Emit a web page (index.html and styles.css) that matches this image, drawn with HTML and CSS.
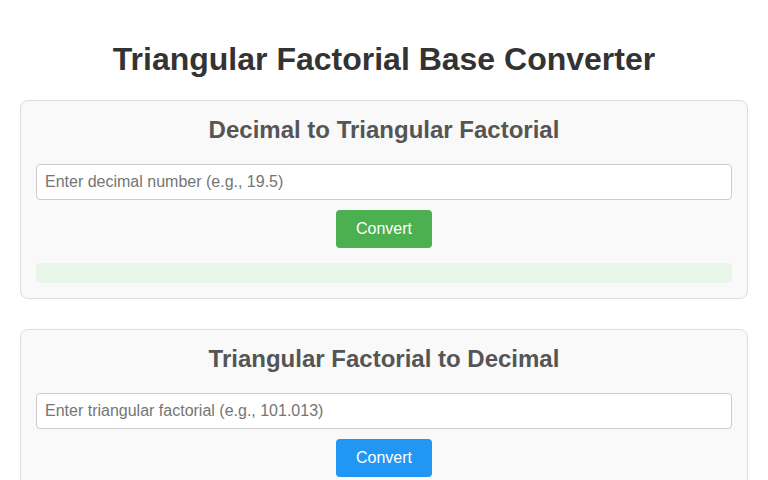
FILE: index.html
```html
<!DOCTYPE html>
<html lang="en">
<head>
  <meta charset="UTF-8" />
  <meta name="viewport" content="width=device-width, initial-scale=1.0"/>
  <title>Triangular Factorial Base Converter</title>
  <link rel="stylesheet" href="styles.css">
</head>
<body>

  <h1>Triangular Factorial Base Converter</h1>

  <div class="converter">
    <h2>Decimal to Triangular Factorial</h2>
    <input type="text" id="decimalInput" placeholder="Enter decimal number (e.g., 19.5)" />
    <button class="btn-green" id="toTriBtn">Convert</button>
    <div class="result result-green" id="triResult"></div>
  </div>

  <div class="converter">
    <h2>Triangular Factorial to Decimal</h2>
    <input type="text" id="triInput" placeholder="Enter triangular factorial (e.g., 101.013)" />
    <button class="btn-blue" id="toDecBtn">Convert</button>
    <div class="result result-blue" id="decResult"></div>
  </div>

</body>
</html>
```

FILE: styles.css
```css
body {
  margin: 0 auto;
  max-width: 800px;
  padding: 20px;
  font-family: "Liberation Sans", Arial, sans-serif;
  background-color: #ffffff;
}

h1 {
  text-align: center;
  color: #333;
  font-size: 32px;
  margin: 0.67em 0;
}

.converter {
  background-color: #f9f9f9;
  border: 1px solid #ddd;
  border-radius: 8px;
  padding: 15px;
  margin-bottom: 30px;
}

.converter h2 {
  text-align: center;
  color: #555;
  font-size: 24px;
  margin: 0 0 20px;
}

.converter input[type="text"] {
  display: block;
  width: 100%;
  box-sizing: border-box;
  padding: 8px;
  font-size: 16px;
  font-family: "Liberation Sans", Arial, sans-serif;
  border: 1px solid #ccc;
  border-radius: 4px;
  background-color: white;
}

.converter input::placeholder {
  color: #757575;
}

.converter button {
  display: block;
  margin: 10px auto 0;
  padding: 10px 20px;
  font-size: 16px;
  font-family: "Liberation Sans", Arial, sans-serif;
  color: white;
  border: none;
  border-radius: 4px;
  cursor: pointer;
}

.btn-green { background-color: #4CAF50; }
.btn-blue { background-color: #2196F3; }

.result {
  margin-top: 15px;
  padding: 10px;
  border-radius: 4px;
}

.result-green { background-color: #e8f5e9; }
.result-blue { background-color: #e3f2fd; }
```
